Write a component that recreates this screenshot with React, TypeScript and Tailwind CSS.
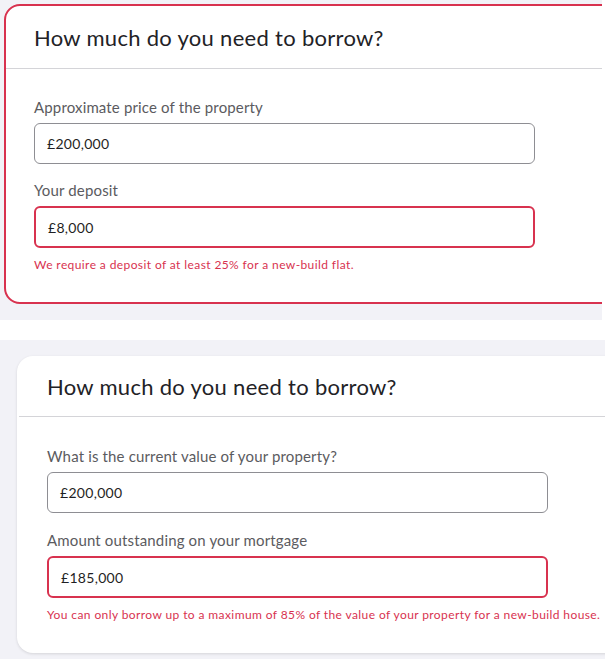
import React from 'react';

const font = { fontFamily: 'Lato, "Noto Sans", sans-serif' };

interface FieldProps {
  label: string;
  value: string;
  error?: boolean;
}

function Field({ label, value, error }: FieldProps) {
  return (
    <div className="flex flex-col">
      <label className="text-[15px] leading-[20px] tracking-[0.15px] text-[#5b5b60]">{label}</label>
      <div
        className={`mt-[6px] w-[501px] flex items-center px-[12px] rounded-[6px] bg-white text-[14px] tracking-[0.3px] text-[#1f1f24] ${
          error ? 'h-[42px] border-2 border-[#d8324f]' : 'h-[41px] border border-[#8e8e93]'
        }`}
      >
        {value}
      </div>
    </div>
  );
}

interface CardProps {
  className: string;
  headerClass: string;
  bodyClass: string;
  fields: FieldProps[];
  message: string;
}

function Card({ className, headerClass, bodyClass, fields, message }: CardProps) {
  return (
    <div className={`w-[640px] bg-white flex flex-col shrink-0 ${className}`}>
      <div className={`flex items-center pl-[28px] border-b border-[#d4d4d8] ${headerClass}`}>
        <h2 className="text-[22px] tracking-[0.3px] text-[#222226]">How much do you need to borrow?</h2>
      </div>
      <div className={`flex flex-col pl-[28px] ${bodyClass}`}>
        {fields.map((f) => (
          <Field key={f.label} {...f} />
        ))}
      </div>
      <p className="pl-[28px] mt-[10px] text-[12px] leading-[14px] tracking-[0.4px] text-[#d8324f]">{message}</p>
    </div>
  );
}

export default function App() {
  return (
    <div className="w-[605px] h-[659px] bg-white" style={font}>
      <section className="w-[602px] h-[320px] bg-[#f2f2f7] overflow-hidden pt-[4px] pl-[4px]">
        <Card
          className="h-[300px] border-2 border-[#d8324f] rounded-[16px]"
          headerClass="h-[63px]"
          bodyClass="pt-[28px] gap-[16px]"
          fields={[
            { label: 'Approximate price of the property', value: '£200,000' },
            { label: 'Your deposit', value: '£8,000', error: true },
          ]}
          message="We require a deposit of at least 25% for a new-build flat."
        />
      </section>
      <section className="mt-[20px] w-[605px] h-[319px] bg-[#f2f2f7] overflow-hidden pt-[16px] pl-[17px]">
        <Card
          className="h-[297px] rounded-[16px] shadow-[0_1px_3px_rgba(0,0,0,0.12)] pl-[2px]"
          headerClass="h-[61px]"
          bodyClass="pt-[29px] gap-[17px]"
          fields={[
            { label: 'What is the current value of your property?', value: '£200,000' },
            { label: 'Amount outstanding on your mortgage', value: '£185,000', error: true },
          ]}
          message="You can only borrow up to a maximum of 85% of the value of your property for a new-build house."
        />
      </section>
    </div>
  );
}
